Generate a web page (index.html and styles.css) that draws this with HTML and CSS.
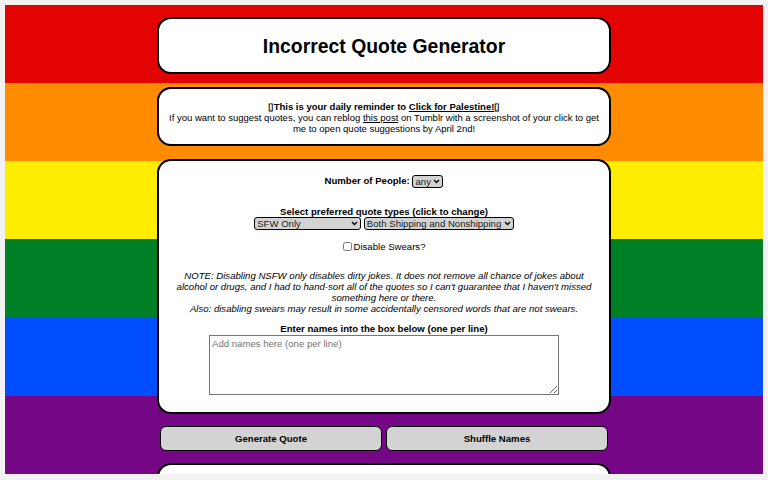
FILE: index.html
```html
<!DOCTYPE html>
<html lang="en">
  <head>
    <meta charset="UTF-8" />
    <meta name="viewport" content="width=device-width, initial-scale=1.0" />
    <title>Incorrect Quote Generator</title>
    <link rel="stylesheet" href="styles.css">
  </head>
  <body>
    <div class="flag">
      <div class="main">
        <div class="card title-card">
          <h1>Incorrect Quote Generator</h1>
        </div>
        <div class="card notice">
          <p><b>&#x25AF;This is your daily reminder to <a href="#">Click for Palestine!</a>&#x25AF;</b><br>
          If you want to suggest quotes, you can reblog <a href="#" class="plain">this post</a> on Tumblr with a screenshot of your click to get me to open quote suggestions by April 2nd!</p>
        </div>
        <div class="card options">
          <div class="row people">
            <label for="people"><b>Number of People:</b></label>
            <select id="people" class="sel">
              <option>any</option>
              <option>1</option>
              <option>2</option>
              <option>3</option>
              <option>4</option>
              <option>5</option>
            </select>
          </div>
          <div class="row types">
            <b>Select preferred quote types (click to change)</b><br>
            <select class="sel sfw">
              <option>SFW Only</option>
              <option>NSFW Only</option>
              <option>Both SFW and NSFW</option>
            </select>
            <select class="sel">
              <option>Both Shipping and Nonshipping</option>
              <option>Shipping Only</option>
              <option>Nonshipping Only</option>
            </select>
          </div>
          <div class="row swears">
            <input type="checkbox" id="swears" /><label for="swears">Disable Swears?</label>
          </div>
          <p class="note">NOTE: Disabling NSFW only disables dirty jokes. It does not remove all chance of jokes about alcohol or drugs, and I had to hand-sort all of the quotes so I can't guarantee that I haven't missed something here or there.<br>
          Also: disabling swears may result in some accidentally censored words that are not swears.</p>
          <div class="row names">
            <b>Enter names into the box below (one per line)</b><br>
            <textarea placeholder="Add names here (one per line)"></textarea>
          </div>
        </div>
        <div class="btn-row">
          <button>Generate Quote</button>
          <button>Shuffle Names</button>
        </div>
        <div class="card output"></div>
      </div>
    </div>
  </body>
</html>
```

FILE: styles.css
```css
html {
  background-color: #f2f2f2;
}
body {
  margin: 5px;
  font-family: "Liberation Sans", Arial, sans-serif;
  font-size: 9.6px;
  color: #000;
}
.flag {
  height: 469px;
  overflow: hidden;
  background: linear-gradient(
    #e40303 0 16.67%,
    #ff8c00 16.67% 33.33%,
    #ffed00 33.33% 50%,
    #008026 50% 66.67%,
    #004dff 66.67% 83.33%,
    #750787 83.33% 100%
  );
}
.main {
  width: 454px;
  margin: 0 auto;
  padding-top: 12px;
}
.card {
  background-color: white;
  border: 2px solid black;
  border-radius: 14px;
  margin-bottom: 13px;
  text-align: center;
}
.title-card h1 {
  margin: 0;
  padding: 15px 0 14px;
  font-size: 19.4px;
  line-height: 24px;
}
.notice {
  padding: 12px 4px 10px;
}
.notice p {
  margin: 0;
  font-size: 9.5px;
  line-height: 11px;
}
a {
  color: black;
}
.options {
  padding: 14px 15px 17px;
  margin-bottom: 12px;
}
.row {
  line-height: 11px;
}
/* flat grey dropdowns with a small chevron */
.sel {
  appearance: none;
  font-family: "Liberation Sans", Arial, sans-serif;
  font-size: 9.6px;
  height: 13px;
  padding: 0 11px 0 2px;
  color: #222;
  background: lightgray url("data:image/svg+xml,%3Csvg xmlns='http://www.w3.org/2000/svg' width='7' height='5' viewBox='0 0 7 5'%3E%3Cpath d='M1 1l2.5 2.5L6 1' fill='none' stroke='%23000' stroke-width='1.3'/%3E%3C/svg%3E") no-repeat right 2px center;
  border: 1px solid black;
  border-radius: 3px;
  vertical-align: middle;
}
.sfw {
  width: 107px;
}
.types {
  margin-top: 18px;
}
.swears {
  margin-top: 11px;
}
.swears input {
  width: 9px;
  height: 9px;
  margin: 0 2px 0 0;
  vertical-align: -1px;
}
.note {
  font-style: italic;
  line-height: 11px;
  margin: 18px 0 9px;
}
textarea {
  box-sizing: border-box;
  width: 350px;
  height: 60px;
  margin-top: 1px;
  border: 1px solid #767676;
  font-family: "Liberation Sans", Arial, sans-serif;
  font-size: 9.6px;
  vertical-align: top;
}
.btn-row {
  display: flex;
  gap: 4px;
  padding: 0 3px;
  margin-bottom: 12px;
}
.btn-row button {
  flex: 1;
  height: 25px;
  background-color: lightgray;
  border: 1px solid black;
  border-radius: 6px;
  font-family: "Liberation Sans", Arial, sans-serif;
  font-size: 9.6px;
  font-weight: bold;
}
.output {
  height: 80px;
}
```
